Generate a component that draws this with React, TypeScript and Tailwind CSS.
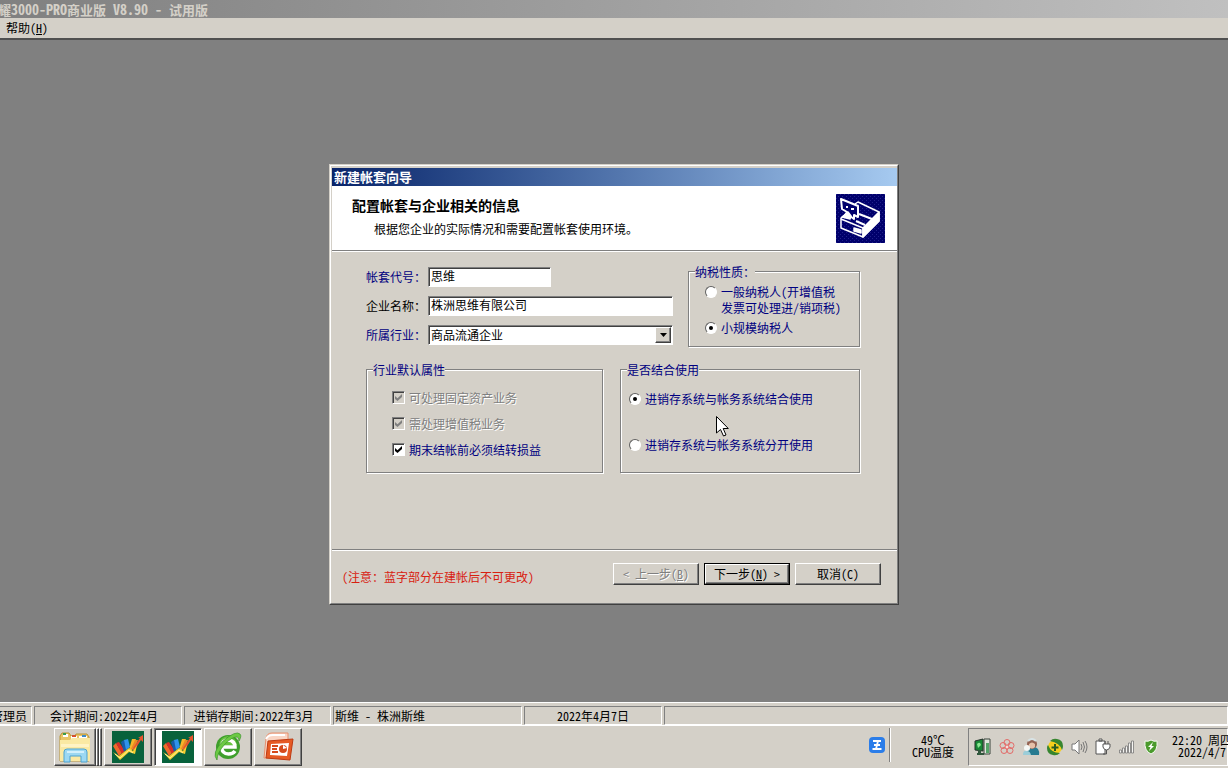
import type { ReactNode } from "react";

const RAISED =
  "border border-t-white border-l-white border-r-[#404040] border-b-[#404040] shadow-[inset_-1px_-1px_0_#808080]";
const SUNKEN =
  "border border-t-[#808080] border-l-[#808080] border-r-white border-b-white shadow-[inset_1px_1px_0_#404040]";

function WizardIcon() {
  return (
    <svg viewBox="0 0 49 49" className="size-[49px] shrink-0 bg-[#00006c]" aria-hidden="true">
      <defs>
        <pattern id="dither" width="4" height="4" patternUnits="userSpaceOnUse">
          <rect width="1" height="1" fill="#20208c" />
          <rect x="2" y="2" width="1" height="1" fill="#20208c" />
        </pattern>
      </defs>
      <rect width="49" height="49" fill="url(#dither)" />
      <g stroke="#fff" strokeWidth="1.5" fill="none" strokeLinejoin="round">
        <path d="M19 10 22 8 43 18V27L27 43 5 34V24L9 21" />
        <path d="M5 25 27 34V43" />
        <path d="M27 34 43 18V27L27 43Z" fill="#fff" />
        <path d="M23 20 36 25M20 27 29 31" strokeWidth="2" />
        <path d="M5 5 22 12V23L18 21V25L14 22 8 23 11 18 6 15Z" fill="#00006c" strokeWidth="2" />
        <path d="M6 23 12 18 15 22 14 25Z" fill="#fff" />
        <path d="M10 13h2M15 15h3" strokeWidth="2" />
        <path d="M18 34 25 36V39L18 37Z" fill="#fff" />
      </g>
    </svg>
  );
}

function CursorArrow() {
  return (
    <svg viewBox="0 0 13 21" className="absolute left-[386px] top-[251px] w-[13px] h-[21px]" aria-hidden="true">
      <path d="M.5.5V17L4.500 13.500 7.500 20 10 19 7.200 12.500H12.300Z" fill="#fff" stroke="#000" />
    </svg>
  );
}

function Group({ title, className = "", children }: { title: string; className?: string; children: ReactNode }) {
  return (
    <fieldset
      className={`min-w-0 border border-[#808080] shadow-[1px_1px_0_#fff,inset_1px_1px_0_#fff] text-[#000080] ${className}`}
    >
      <legend className="ml-[6px] h-[14px] leading-[14px] bg-[#d4d0c8]">{title}</legend>
      {children}
    </fieldset>
  );
}

function Radio({ name, label, defaultChecked }: { name: string; label: ReactNode; defaultChecked?: boolean }) {
  return (
    <label className="flex items-start gap-1">
      <input
        type="radio"
        name={name}
        defaultChecked={defaultChecked}
        className="mt-[2px] appearance-none grid place-items-center size-3 shrink-0 rounded-full bg-white border border-t-[#606060] border-l-[#606060] border-r-white border-b-white before:size-1 before:rounded-full checked:before:bg-black"
      />
      <span>{label}</span>
    </label>
  );
}

function Check({ label, disabled }: { label: string; disabled?: boolean }) {
  return (
    <label
      className={`flex items-center gap-1 h-4 ${disabled ? "text-[#808080] [text-shadow:1px_1px_0_#fff]" : ""}`}
    >
      <span className="grid *:[grid-area:1/1] place-items-center">
        <input
          type="checkbox"
          defaultChecked
          disabled={disabled}
          className={`peer appearance-none size-[13px] ${SUNKEN} bg-white disabled:bg-[#d4d0c8]`}
        />
        <svg
          viewBox="0 0 7 7"
          className="size-[7px] invisible peer-checked:visible pointer-events-none"
          aria-hidden="true"
        >
          <path d="M0 2V5L2.500 7 7 3V0L2.500 4.200Z" fill={disabled ? "#808080" : "#000"} />
        </svg>
      </span>
      {label}
    </label>
  );
}

function WizardDialog() {
  return (
    <section
      role="dialog"
      aria-labelledby="wizard-title"
      className="relative w-full max-w-[570px] bg-[#d4d0c8] border border-t-[#d4d0c8] border-l-[#d4d0c8] border-r-[#404040] border-b-[#404040]"
    >
      <div className="pl-px pt-[2px] border border-t-white border-l-white border-r-[#808080] border-b-[#808080]">
        <h1
          id="wizard-title"
          className="h-[18px] pl-[2px] leading-[18px] text-[13px] font-bold text-white bg-linear-to-r from-[#0a246a] to-[#a6caf0]"
        >
          新建帐套向导
        </h1>
        <header className="flex justify-between h-[65px] pt-2 pl-5 pr-3 bg-white border-b border-[#808080]">
          <div>
            <h2 className="mt-[3px] h-4 leading-4 text-[14px] font-bold">配置帐套与企业相关的信息</h2>
            <p className="mt-2 pl-[22px] leading-4">根据您企业的实际情况和需要配置帐套使用环境。</p>
          </div>
          <WizardIcon />
        </header>

        <form className="border-t border-white pt-[13px] pl-[34px] pr-[37px] pb-[76px]">
          <div className="flex justify-between">
            <div className="flex flex-col gap-[9px] pt-[2px] w-[307px]">
              <div className="flex items-center">
                <label htmlFor="code" className="w-[62px] text-[#000080]">帐套代号：</label>
                <input
                  id="code"
                  defaultValue="思维"
                  className={`w-[123px] h-5 px-[2px] pb-[2px] bg-white ${SUNKEN}`}
                />
              </div>
              <div className="flex items-center">
                <label htmlFor="company" className="w-[62px]">企业名称：</label>
                <input
                  id="company"
                  defaultValue="株洲思维有限公司"
                  className={`flex-1 min-w-0 h-5 px-[2px] pb-[2px] bg-white ${SUNKEN}`}
                />
              </div>
              <div className="flex items-center">
                <label htmlFor="industry" className="w-[62px] text-[#000080]">所属行业：</label>
                <div className="relative flex-1">
                  <select
                    id="industry"
                    className={`block w-full h-5 pl-[2px] pr-5 leading-[18px] appearance-none bg-white ${SUNKEN}`}
                  >
                    <option>商品流通企业</option>
                  </select>
                  <span
                    className={`absolute right-[2px] top-[2px] w-4 h-4 grid place-items-center bg-[#d4d0c8] pointer-events-none ${RAISED}`}
                  >
                    <svg viewBox="0 0 7 4" className="w-[7px] h-1" aria-hidden="true">
                      <path d="M0 0H7L3.500 4Z" />
                    </svg>
                  </span>
                </div>
              </div>
            </div>
            <Group title="纳税性质：" className="w-[172px] h-[82px]">
              <div className="pt-[5px] pl-4 flex flex-col gap-1 leading-4">
                <Radio
                  name="taxpayer"
                  label={
                    <>
                      一般纳税人(开增值税
                      <br />
                      发票可处理进/销项税)
                    </>
                  }
                />
                <Radio name="taxpayer" label="小规模纳税人" defaultChecked />
              </div>
            </Group>
          </div>

          <div className="flex gap-[17px] mt-4">
            <Group title="行业默认属性" className="w-[237px] h-[110px]">
              <div className="pt-[13px] pl-[25px] flex flex-col gap-[10px]">
                <Check label="可处理固定资产业务" disabled />
                <Check label="需处理增值税业务" disabled />
                <Check label="期末结帐前必须结转损益" />
              </div>
            </Group>
            <Group title="是否结合使用" className="flex-1 h-[110px]">
              <div className="pt-[14px] pl-2 flex flex-col gap-[30px] leading-4">
                <Radio name="combine" label="进销存系统与帐务系统结合使用" defaultChecked />
                <Radio name="combine" label="进销存系统与帐务系统分开使用" />
              </div>
            </Group>
          </div>
        </form>

        <footer className="flex items-start justify-between h-[54px] pt-[13px] pl-[10px] pr-4 border-t border-[#808080] shadow-[inset_0_1px_0_#fff]">
          <p className="pt-[6px] leading-4 text-[#d82010]">(注意：蓝字部分在建帐后不可更改)</p>
          <div className="flex gap-[5px]">
            <button
              type="button"
              disabled
              className={`w-[86px] h-[22px] whitespace-pre text-[#808080] [text-shadow:1px_1px_0_#fff] ${RAISED}`}
            >
              &lt; 上一步(<u>B</u>)
            </button>
            <button type="button" className="w-[86px] h-[22px] border border-black">
              <span className={`block h-5 leading-[18px] whitespace-pre ${RAISED}`}>
                下一步(<u>N</u>) &gt;
              </span>
            </button>
            <button type="button" className={`w-[86px] h-[22px] ${RAISED}`}>
              取消(C)
            </button>
          </div>
        </footer>
      </div>
      <CursorArrow />
    </section>
  );
}

function StatusCell({ className = "", children }: { className?: string; children?: ReactNode }) {
  return (
    <div
      className={`h-[19px] leading-[17px] whitespace-pre border border-t-[#808080] border-l-[#808080] border-r-white border-b-white ${className}`}
    >
      {children}
    </div>
  );
}

function ExplorerIcon() {
  return (
    <svg viewBox="0 0 34 32" className="w-[34px] h-8" aria-hidden="true">
      <path d="M2 5 4 2h7l2 3h4l1-2h11l2 3v24H2Z" fill="#e8c566" stroke="#b99435" />
      <path d="M5 3h5v3H5ZM13 5h6v3h-6ZM21 5h8v3h-8Z" fill="#fff" />
      <path d="M5 2h3v2H5Z" fill="#3a9b4a" />
      <path d="M14 4h4v2h-4Z" fill="#d5502c" />
      <path d="M24 4h4v2h-4Z" fill="#408bc8" />
      <path d="M2 9h10l2-2h18v23H2Z" fill="#fae9a3" />
      <path d="M3 13h28v3H3Z" fill="#fff3c4" />
      <path d="M6 31V21q0-3 3-3h17q3 0 3 3v10h-6v-6H12v6Z" fill="#9cd8f2" stroke="#4da3d0" />
      <path d="M9 21h17" stroke="#e5f8ff" strokeWidth="1.500" />
    </svg>
  );
}

function LedgerIcon() {
  return (
    <svg viewBox="0 0 32 32" className="size-8" aria-hidden="true">
      <path fill="#08623c" d="M0 0h32v32H0z" />
      <path d="M1 15 4 12 10 22 7 25Z" fill="#f0692c" />
      <path d="M4 12 7 11 13 20 10 23Z" fill="#d62f28" />
      <path d="M9 11 12 9 15 18 12 21Z" fill="#185aa8" />
      <path d="M12 9 16 8 18 16 14 19Z" fill="#2f93ea" />
      <path d="M18 15 20 8 24 8 20 19 17 20Z" fill="#f5b52b" />
      <path d="M19 18 23 9 26 9 22 19Z" fill="#e98925" />
      <path d="M21 17 28 7 26 7 31 4 31 11 29 9 22 20Z" fill="#e5532e" />
      <path d="M1 21 7 25 17 17 21 20 25 14 23 23 17 21 8 29Z" fill="#f7cf30" />
      <path d="M3 23 8 27 17 19 21 22" fill="none" stroke="#fff099" />
    </svg>
  );
}

function BrowserIcon() {
  return (
    <svg viewBox="0 0 32 32" className="size-8" aria-hidden="true">
      <circle cx="16" cy="16" r="12" fill="#3f9f2c" />
      <path d="M7 14q1-8 9-9 8 1 9 9Z" fill="#69c440" />
      <path
        d="M23 20Q21 23 16.500 23q-6.500 0-7-7Q10 9 16.500 9 23 10 23 16H10"
        fill="none"
        stroke="#fff"
        strokeWidth="3.500"
      />
      <path
        d="M5 29Q-1 22 11 10 24-1 28 3q2 2-1 7 0-4-2-4-5 0-12 7Q5 22 5 29Z"
        fill="#6cc944"
        stroke="#2f8c24"
        strokeWidth=".6"
      />
    </svg>
  );
}

function SlidesIcon() {
  return (
    <svg viewBox="0 0 34 32" className="w-[34px] h-8" aria-hidden="true">
      <path d="M3 27 5 7q1-5 6-5h16v25Z" fill="#f9d5c4" stroke="#e7906f" />
      <path d="M5 8q2-4 7-4h12" fill="none" stroke="#fff" strokeWidth="2" />
      <path d="M7 10 32 8 29 29 5 27Z" fill="#e65a24" stroke="#bd3a12" />
      <path d="M10 13 28 12 26 25 9 24Z" fill="#fff" />
      <path d="M11 15h6M11 18h5M11 21h6" stroke="#d64a1c" strokeWidth="2" />
      <circle cx="22" cy="18" r="4" fill="#d64a1c" />
      <path d="M22 18v-4l4 3Z" fill="#fff" />
    </svg>
  );
}

function TrayIcons() {
  const box = "size-[18px] shrink-0";
  return (
    <div className="flex gap-[6px]" aria-hidden="true">
      <svg viewBox="0 0 18 18" className={box}>
        <path d="M1 3 9 1v12l-8-1Z" fill="#168734" stroke="#26302b" />
        <path d="M3 6q3-3 4 1L4 10Z" fill="#8be591" />
        <path d="M4 12h3v3h3v2H3v-2h1Z" fill="#31583d" />
        <path d="M10 1h6v15h-6Z" fill="#dfe7dc" stroke="#39423b" />
        <path d="M12 5h3v10h-3Z" fill="#55a568" />
      </svg>
      <svg viewBox="0 0 18 18" className={box} fill="none" stroke="#e36a68">
        <circle cx="9" cy="4.500" r="3" />
        <circle cx="13" cy="7.500" r="3" />
        <circle cx="12" cy="12.500" r="3" />
        <circle cx="6" cy="12.500" r="3" />
        <circle cx="5" cy="7.500" r="3" />
        <circle cx="9" cy="9" r="2" fill="#f6dcda" />
      </svg>
      <svg viewBox="0 0 18 18" className={box}>
        <path d="M4 17q0-8 7-8t6 8Z" fill="#277b91" />
        <circle cx="10" cy="6" r="5" fill="#946353" />
        <path d="M7 6q3-3 6 0v3q-3 3-6 0Z" fill="#e6c0a8" />
        <path d="M6 3q4-4 8 0" stroke="#d8e2e4" strokeWidth="2" fill="none" />
        <circle cx="5" cy="10" r="3" fill="#f4f7f5" />
        <path d="M1 17q0-5 4-4 3 0 4 4Z" fill="#9ccdd8" />
      </svg>
      <svg viewBox="0 0 18 18" className={box}>
        <circle cx="9" cy="9" r="7" fill="#f6cf1c" />
        <path d="M4 3q3-3 7-2 6 1 6 7 0 2-1 4-2-7-12-9Z" fill="#37852f" />
        <path d="M14 15q-3 3-7 2-6-1-6-7 0-2 1-3 3 8 12 8Z" fill="#37852f" />
        <path d="M9 6v7M5.500 9.500h7" stroke="#285c21" strokeWidth="2" />
      </svg>
      <svg viewBox="0 0 18 18" className={box} fill="none" stroke="#777">
        <path d="M2 6h3l4-4v14l-4-4H2Z" fill="#fff" />
        <path d="M11 6q2 3 0 6M13 4q3 5 0 10M15 3q4 6 0 12" />
      </svg>
      <svg viewBox="0 0 18 18" className={box} fill="#fff" stroke="#555">
        <path d="M2 3h9v13H2ZM5 1h3v2H5Z" />
        <path d="M11 3v3M14 3v3M12.500 12v4H9" fill="none" />
        <path d="M9 6h7v3q-1 3-3.500 3T9 9Z" />
      </svg>
      <svg viewBox="0 0 18 18" className={box} fill="#f5f5f2" stroke="#777" strokeWidth=".8">
        <path d="M1.500 12h2v3h-2ZM4.500 10h2v5h-2ZM7.500 8h2v7h-2ZM10.500 5h2v10h-2ZM13.500 3h2v12h-2Z" />
      </svg>
      <svg viewBox="0 0 18 18" className={box}>
        <path d="M9 2q3 2 6 1 1 10-6 13Q2 13 3 3q3 1 6-1Z" fill="#4b9a2d" stroke="#f4faef" />
        <path d="M11 4 6 9h2.500L7 13l5-5H9.500Z" fill="#fff" />
      </svg>
    </div>
  );
}

function TaskButton({ label, active, children }: { label: string; active?: boolean; children: ReactNode }) {
  return (
    <button
      type="button"
      aria-label={label}
      className={`w-12 h-[38px] grid place-items-center ${active ? `bg-white ${SUNKEN}` : RAISED}`}
    >
      {children}
    </button>
  );
}

function Taskbar() {
  return (
    <nav className="flex items-start h-[43px] pt-[2px] pl-[54px] bg-[#d4d0c8] border-t border-white">
      <div className="flex gap-[2px]">
        <div className="flex">
          <button
            type="button"
            aria-label="资源管理器"
            className={`w-[42px] h-[38px] grid place-items-center ${RAISED}`}
          >
            <ExplorerIcon />
          </button>
          <span className={`w-[3px] h-[38px] ${RAISED}`} />
          <span className={`w-[3px] h-[38px] ${RAISED}`} />
        </div>
        <TaskButton label="帐务系统">
          <LedgerIcon />
        </TaskButton>
        <TaskButton label="新建帐套" active>
          <LedgerIcon />
        </TaskButton>
        <TaskButton label="浏览器">
          <BrowserIcon />
        </TaskButton>
        <TaskButton label="演示文稿">
          <SlidesIcon />
        </TaskButton>
      </div>

      <div className="ml-auto flex items-start shrink-0">
        <div className="h-[34px] pr-1 pt-[9px] border-r border-[#808080] shadow-[1px_0_0_#fff]">
          <svg viewBox="0 0 16 16" className="size-4" aria-hidden="true">
            <rect width="16" height="16" rx="4" fill="#2b7de9" />
            <path d="M4 4h8M5 8h6M3.500 12h9M9 4 7 12" stroke="#fff" strokeWidth="1.800" />
          </svg>
        </div>
        <div className="w-[78px] pt-[6px] pl-2 text-center leading-3">
          <p>49℃</p>
          <p>CPU温度</p>
        </div>
        <div className="flex items-start h-[38px] w-[260px] border border-t-[#808080] border-l-[#808080] border-r-white border-b-white">
          <div className="pt-[9px] pl-[5px]">
            <TrayIcons />
          </div>
          <div className="ml-3 pt-[5px] shrink-0 text-center leading-3 whitespace-nowrap">
            <p>22:20 周四</p>
            <p>2022/4/7</p>
          </div>
        </div>
      </div>
    </nav>
  );
}

export default function App() {
  return (
    <div className="flex flex-col min-h-screen overflow-hidden bg-[#808080] text-[12px] text-black font-['Noto_Sans_Mono_CJK_SC','Noto_Sans_CJK_SC',sans-serif]">
      <div className="flex h-[18px] overflow-hidden bg-linear-to-r from-[#808080] to-[#c0c0c0]">
        <p className="-ml-[2px] leading-[18px] whitespace-pre text-[13px] font-bold text-[#d4d0c8]">
          耀<span className="text-[14px]">3000-PRO</span>商业版<span className="text-[14px]"> V8.90 - </span>试用版
        </p>
      </div>
      <div className="h-[22px] px-[6px] bg-[#d4d0c8] border-b-2 border-[#505050]">
        <button type="button" className="h-5 leading-5">
          帮助(<u>H</u>)
        </button>
      </div>

      <main className="flex-1 flex items-center justify-center pt-[26px]">
        <WizardDialog />
      </main>

      <footer className="flex gap-[2px] h-[23px] pt-[3px] bg-[#d4d0c8] border-t border-white">
        <StatusCell className="w-8 flex justify-end pr-1 border-l-0">管理员</StatusCell>
        <StatusCell className="w-[148px] pr-2 text-center">会计期间:2022年4月</StatusCell>
        <StatusCell className="w-[147px] pr-2 text-center">进销存期间:2022年3月</StatusCell>
        <StatusCell className="w-[189px] pl-px">斯维 - 株洲斯维</StatusCell>
        <StatusCell className="w-[138px] text-center">2022年4月7日</StatusCell>
        <StatusCell className="flex-1" />
      </footer>
      <Taskbar />
    </div>
  );
}
